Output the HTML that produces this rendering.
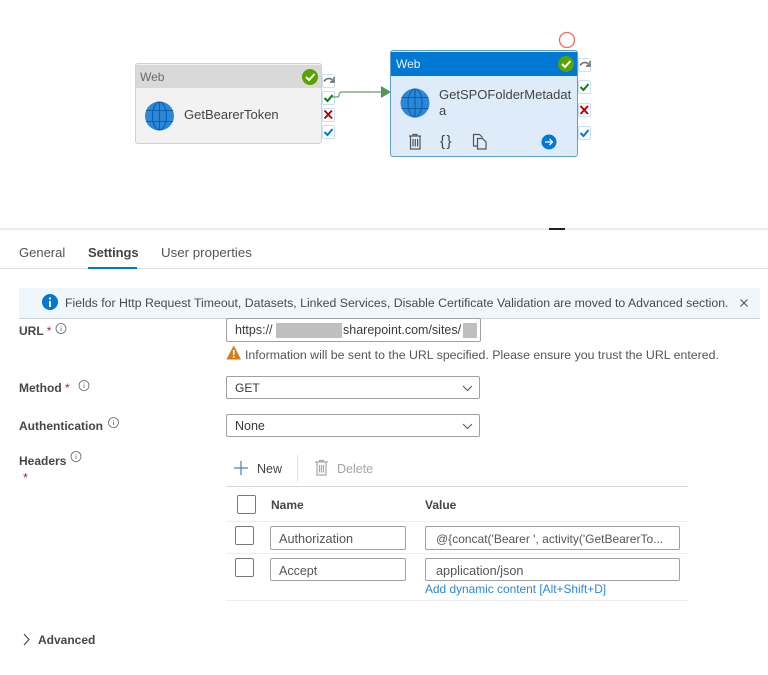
<!DOCTYPE html>
<html><head><meta charset="utf-8">
<style>
html,body{margin:0;padding:0;background:#fff;}
body{width:768px;height:675px;position:relative;overflow:hidden;font-family:"Liberation Sans",sans-serif;color:#3b3a39;filter:blur(.35px);}
.a{position:absolute;}
.t{position:absolute;white-space:nowrap;font-size:12.5px;line-height:16px;}
.b{font-weight:bold;color:#484644;font-size:12px;}
.in{position:absolute;box-sizing:border-box;border:1px solid #a0a0a0;border-radius:2px;background:#fff;}
.cb{position:absolute;box-sizing:border-box;border:1px solid #7a7977;border-radius:2px;width:19px;height:19px;background:#fff;}
.g{position:absolute;background:#bfbfbf;}
.s{position:absolute;box-sizing:border-box;width:13px;height:14px;border:1px solid #c7e0f4;border-radius:2px;background:#fff;}
svg{position:absolute;overflow:visible;z-index:5;}
</style></head><body>

<!-- Node 1 -->
<div class="a" style="left:135px;top:63px;width:187px;height:81px;box-sizing:border-box;border:1px solid #d0d0d0;border-radius:3px;background:#f2f2f2;"></div>
<div class="a" style="left:136px;top:65px;width:185px;height:23px;background:#d9d9d9;"></div>
<div class="t" style="left:140px;top:69px;font-size:12px;color:#6b6b6b;">Web</div>
<div class="t" style="left:184px;top:106px;font-size:13px;line-height:18px;color:#444;">GetBearerToken</div>

<!-- Node 1 side buttons -->
<div class="s" style="left:322px;top:74px;"></div>
<div class="s" style="left:322px;top:91px;"></div>
<div class="s" style="left:322px;top:108px;"></div>
<div class="s" style="left:322px;top:125px;"></div>

<!-- Node 2 -->
<div class="a" style="left:390px;top:50px;width:188px;height:107px;box-sizing:border-box;border:1px solid #5a9fd0;border-radius:3px;background:#deecf9;"></div>
<div class="a" style="left:391px;top:52px;width:186px;height:24px;background:#0078d4;"></div>
<div class="t" style="left:396px;top:56px;font-size:12px;color:#e8f3fc;">Web</div>
<div class="t" style="left:439px;top:87px;font-size:13px;line-height:16px;color:#444;">GetSPOFolderMetadat</div>
<div class="t" style="left:439px;top:103px;font-size:13px;line-height:16px;color:#444;">a</div>
<div class="t" style="left:440px;top:133px;font-size:15px;line-height:18px;color:#444;letter-spacing:1.500px;">{}</div>

<!-- Node 2 side buttons -->
<div class="s" style="left:578px;top:58px;"></div>
<div class="s" style="left:578px;top:80px;"></div>
<div class="s" style="left:578px;top:103px;"></div>
<div class="s" style="left:578px;top:126px;"></div>

<svg style="left:0;top:0" width="768" height="230" viewBox="0 0 768 230">
  <circle cx="159.500" cy="116" r="14.500" fill="#2b88d8"/>
  <g fill="none" stroke="#0f5ea8" stroke-width="1.100"><ellipse cx="159.500" cy="116" rx="7" ry="14"/><path d="M159.500 102v28M146 110.500h27M146 121.500h27"/></g>
  <circle cx="415" cy="103" r="14.500" fill="#2b88d8"/>
  <g fill="none" stroke="#0f5ea8" stroke-width="1.100"><ellipse cx="415" cy="103" rx="7" ry="14"/><path d="M415 89v28M401.500 97.500h27M401.500 108.500h27"/></g>
  <circle cx="310" cy="77" r="8" fill="#57a300"/><path d="M306 77l3 3 5.500-6" fill="none" stroke="#fff" stroke-width="2"/>
  <circle cx="566" cy="64" r="8" fill="#57a300"/><path d="M562 64l3 3 5.500-6" fill="none" stroke="#fff" stroke-width="2"/>
  <circle cx="567" cy="40" r="7.500" fill="none" stroke="#f1665c" stroke-width="1.300"/>
  <!-- connector -->
  <path d="M332 97h5q2 0 2-2t2-3h41" fill="none" stroke="#5f9e6e" stroke-width="1.200"/>
  <path d="M381 86l10 6-10 6z" fill="#4c9a50"/>
  <!-- side icons 1 -->
  <path d="M324 81.500q2-3 5-3t4 3M334 77v5h-4" fill="none" stroke="#7a7a7a" stroke-width="1.700"/>
  <path d="M324.500 98l3 3 5-6" fill="none" stroke="#107c10" stroke-width="2"/>
  <path d="M324.500 110.500l7.500 8M332 110.500l-7.500 8" fill="none" stroke="#c00000" stroke-width="2"/>
  <path d="M324.500 132l3 3 5-6" fill="none" stroke="#0078d4" stroke-width="2"/>
  <!-- side icons 2 -->
  <path d="M580 65.500q2-3 5-3t4 3M590 61v5h-4" fill="none" stroke="#7a7a7a" stroke-width="1.700"/>
  <path d="M580.500 87l3 3 5-6" fill="none" stroke="#107c10" stroke-width="2"/>
  <path d="M580.500 106l7.500 8M588 106l-7.500 8" fill="none" stroke="#c00000" stroke-width="2"/>
  <path d="M580.500 133l3 3 5-6" fill="none" stroke="#0078d4" stroke-width="2"/>
  <!-- trash -->
  <g fill="none" stroke="#555" stroke-width="1.200"><path d="M409 136h12M413 136v-1.500h4v1.500M410.500 136v13h9.500v-13M413 139v7.500M415.300 139v7.500M417.600 139v7.500"/></g>
  <!-- copy -->
  <g fill="none" stroke="#555" stroke-width="1.200"><path d="M477 146h-3.500v-11.500h6l3 3M477.500 138.500h5l3.500 3.500v7h-8.500z"/></g>
  <!-- go -->
  <circle cx="549" cy="142" r="7.500" fill="#0078d4"/><path d="M545 142h7M549.500 139l3 3-3 3" fill="none" stroke="#fff" stroke-width="1.300"/>
</svg>

<!-- Divider -->
<div class="a" style="left:0;top:228px;width:768px;height:2px;background:#ececec;"></div>
<div class="a" style="left:549px;top:228px;width:16px;height:2px;background:#222;"></div>

<!-- Tabs -->
<div class="t" style="left:19px;top:245px;font-size:13px;color:#555;">General</div>
<div class="t" style="left:88px;top:245px;font-size:13px;font-weight:bold;color:#444;letter-spacing:-.1px;">Settings</div>
<div class="t" style="left:161px;top:245px;font-size:13.300px;color:#555;">User properties</div>
<div class="a" style="left:0;top:268px;width:768px;height:1px;background:#e1e1e1;"></div>
<div class="a" style="left:88px;top:267px;width:49px;height:2px;background:#0078d4;"></div>

<!-- Banner -->
<div class="a" style="left:19px;top:288px;width:741px;height:30px;background:#eff6fc;border-bottom:1px solid #d4d4d4;"></div>
<div class="t" style="left:65px;top:295px;font-size:12.300px;color:#4a4a4a;">Fields for Http Request Timeout, Datasets, Linked Services, Disable Certificate Validation are moved to Advanced section.</div>

<!-- URL -->
<div class="t b" style="left:19px;top:323px;">URL <span style="color:#a4262c;font-weight:normal;">*</span></div>
<div class="in" style="left:226px;top:318px;width:255px;height:24px;"></div>
<div class="t" style="left:235px;top:322px;">https://</div>
<div class="g" style="left:276px;top:323px;width:66px;height:15px;"></div>
<div class="t" style="left:343px;top:322px;">sharepoint.com/sites/</div>
<div class="g" style="left:463px;top:323px;width:14px;height:15px;"></div>
<div class="t" style="left:245px;top:347px;font-size:12.350px;color:#555;">Information will be sent to the URL specified. Please ensure you trust the URL entered.</div>

<!-- Method -->
<div class="t b" style="left:19px;top:380px;">Method <span style="color:#a4262c;font-weight:normal;">*</span></div>
<div class="in" style="left:226px;top:376px;width:254px;height:23px;"></div>
<div class="t" style="left:235px;top:380px;font-size:12px;">GET</div>

<!-- Authentication -->
<div class="t b" style="left:19px;top:418px;">Authentication</div>
<div class="in" style="left:226px;top:414px;width:254px;height:23px;"></div>
<div class="t" style="left:235px;top:418px;">None</div>

<!-- Headers -->
<div class="t b" style="left:19px;top:453px;">Headers</div>
<div class="t" style="left:23px;top:470px;color:#a4262c;">*</div>

<div class="t" style="left:257px;top:461px;color:#444;">New</div>
<div class="a" style="left:297px;top:455px;width:1px;height:27px;background:#e1e1e1;"></div>
<div class="t" style="left:337px;top:461px;color:#a6a6a6;">Delete</div>
<div class="a" style="left:226px;top:486px;width:462px;height:1px;background:#d8d8d8;"></div>

<div class="cb" style="left:237px;top:495px;"></div>
<div class="t b" style="left:271px;top:497px;">Name</div>
<div class="t b" style="left:425px;top:497px;">Value</div>
<div class="a" style="left:226px;top:521px;width:462px;height:1px;background:#eee;"></div>

<div class="cb" style="left:235px;top:526px;"></div>
<div class="in" style="left:270px;top:526px;width:136px;height:24px;"></div>
<div class="t" style="left:279px;top:531px;font-size:12.700px;color:#555;">Authorization</div>
<div class="in" style="left:425px;top:526px;width:255px;height:24px;"></div>
<div class="t" style="left:436px;top:531px;font-size:12px;color:#555;">@{concat('Bearer ', activity('GetBearerTo...</div>
<div class="a" style="left:226px;top:553px;width:462px;height:1px;background:#eee;"></div>

<div class="cb" style="left:235px;top:558px;"></div>
<div class="in" style="left:270px;top:558px;width:136px;height:23px;"></div>
<div class="t" style="left:279px;top:563px;color:#555;">Accept</div>
<div class="in" style="left:425px;top:558px;width:255px;height:23px;"></div>
<div class="t" style="left:436px;top:563px;font-size:12.700px;color:#555;">application/json</div>
<div class="t" style="left:425px;top:581px;font-size:11.900px;color:#2b88d8;">Add dynamic content [Alt+Shift+D]</div>
<div class="a" style="left:226px;top:600px;width:462px;height:1px;background:#eee;"></div>

<div class="t b" style="left:38px;top:632px;">Advanced</div>

<svg style="left:0;top:0" width="768" height="675" viewBox="0 0 768 675">
  <circle cx="50" cy="302" r="8" fill="#0078d4"/>
  <rect x="49" y="301" width="2" height="6" fill="#fff"/><rect x="49" y="297.500" width="2" height="2" fill="#fff"/>
  <path d="M740.500 299.500l7 7M747.500 299.500l-7 7" stroke="#555" stroke-width="1.100" fill="none"/>
  <path d="M233.700 346.500l6.500 12.500h-13z" fill="#d97a14" stroke="#d97a14" stroke-linejoin="round"/>
  <rect x="232.900" y="350" width="1.700" height="5" fill="#fff"/><rect x="232.900" y="356" width="1.700" height="1.700" fill="#fff"/>
  <g fill="none" stroke="#666" stroke-width=".8">
    <circle cx="61" cy="328.500" r="5"/><path d="M61 327.500v3.500M61 325.800v.8"/>
    <circle cx="84" cy="385.500" r="5"/><path d="M84 384.500v3.500M84 382.800v.8"/>
    <circle cx="113.500" cy="422.500" r="5"/><path d="M113.500 421.500v3.500M113.500 419.800v.8"/>
    <circle cx="76" cy="456.500" r="5"/><path d="M76 455.500v3.500M76 453.800v.8"/>
  </g>
  <path d="M463 386l4.500 4.500 4.500-4.500M463 424l4.500 4.500 4.500-4.500" fill="none" stroke="#555" stroke-width="1"/>
  <path d="M241 461v14M234 468h14" stroke="#3d85c6" stroke-width="1.200" fill="none"/>
  <g fill="none" stroke="#a8a8a8" stroke-width="1.200"><path d="M315 462h13M319.500 462v-1.500h4v1.500M317 462v13h9v-13M319.500 465v7.500M321.500 465v7.500M323.500 465v7.500"/></g>
  <path d="M24 634l5 5.500-5 5.500" fill="none" stroke="#444" stroke-width="1.100"/>
</svg>

</body></html>
